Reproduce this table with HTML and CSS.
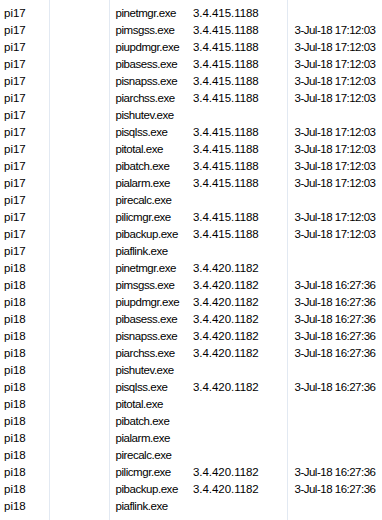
FILE: index.html
```html
<!DOCTYPE html>
<html>
<head>
<meta charset="utf-8">
<link rel="stylesheet" href="styles.css">
</head>
<body>
<table class="grid">
<colgroup><col class="c1"><col class="c2"><col class="c3"><col class="c4"><col class="c5"></colgroup>
<tbody>
<tr><td>pi17</td><td></td><td class="nm">pinetmgr.exe</td><td class="ver">3.4.415.1188</td><td class="dt"></td></tr>
<tr><td>pi17</td><td></td><td class="nm">pimsgss.exe</td><td class="ver">3.4.415.1188</td><td class="dt">3-Jul-18 17:12:03</td></tr>
<tr><td>pi17</td><td></td><td class="nm">piupdmgr.exe</td><td class="ver">3.4.415.1188</td><td class="dt">3-Jul-18 17:12:03</td></tr>
<tr><td>pi17</td><td></td><td class="nm">pibasess.exe</td><td class="ver">3.4.415.1188</td><td class="dt">3-Jul-18 17:12:03</td></tr>
<tr><td>pi17</td><td></td><td class="nm">pisnapss.exe</td><td class="ver">3.4.415.1188</td><td class="dt">3-Jul-18 17:12:03</td></tr>
<tr><td>pi17</td><td></td><td class="nm">piarchss.exe</td><td class="ver">3.4.415.1188</td><td class="dt">3-Jul-18 17:12:03</td></tr>
<tr><td>pi17</td><td></td><td class="nm">pishutev.exe</td><td class="ver"></td><td class="dt"></td></tr>
<tr><td>pi17</td><td></td><td class="nm">pisqlss.exe</td><td class="ver">3.4.415.1188</td><td class="dt">3-Jul-18 17:12:03</td></tr>
<tr><td>pi17</td><td></td><td class="nm">pitotal.exe</td><td class="ver">3.4.415.1188</td><td class="dt">3-Jul-18 17:12:03</td></tr>
<tr><td>pi17</td><td></td><td class="nm">pibatch.exe</td><td class="ver">3.4.415.1188</td><td class="dt">3-Jul-18 17:12:03</td></tr>
<tr><td>pi17</td><td></td><td class="nm">pialarm.exe</td><td class="ver">3.4.415.1188</td><td class="dt">3-Jul-18 17:12:03</td></tr>
<tr><td>pi17</td><td></td><td class="nm">pirecalc.exe</td><td class="ver"></td><td class="dt"></td></tr>
<tr><td>pi17</td><td></td><td class="nm">pilicmgr.exe</td><td class="ver">3.4.415.1188</td><td class="dt">3-Jul-18 17:12:03</td></tr>
<tr><td>pi17</td><td></td><td class="nm">pibackup.exe</td><td class="ver">3.4.415.1188</td><td class="dt">3-Jul-18 17:12:03</td></tr>
<tr><td>pi17</td><td></td><td class="nm">piaflink.exe</td><td class="ver"></td><td class="dt"></td></tr>
<tr><td>pi18</td><td></td><td class="nm">pinetmgr.exe</td><td class="ver">3.4.420.1182</td><td class="dt"></td></tr>
<tr><td>pi18</td><td></td><td class="nm">pimsgss.exe</td><td class="ver">3.4.420.1182</td><td class="dt">3-Jul-18 16:27:36</td></tr>
<tr><td>pi18</td><td></td><td class="nm">piupdmgr.exe</td><td class="ver">3.4.420.1182</td><td class="dt">3-Jul-18 16:27:36</td></tr>
<tr><td>pi18</td><td></td><td class="nm">pibasess.exe</td><td class="ver">3.4.420.1182</td><td class="dt">3-Jul-18 16:27:36</td></tr>
<tr><td>pi18</td><td></td><td class="nm">pisnapss.exe</td><td class="ver">3.4.420.1182</td><td class="dt">3-Jul-18 16:27:36</td></tr>
<tr><td>pi18</td><td></td><td class="nm">piarchss.exe</td><td class="ver">3.4.420.1182</td><td class="dt">3-Jul-18 16:27:36</td></tr>
<tr><td>pi18</td><td></td><td class="nm">pishutev.exe</td><td class="ver"></td><td class="dt"></td></tr>
<tr><td>pi18</td><td></td><td class="nm">pisqlss.exe</td><td class="ver">3.4.420.1182</td><td class="dt">3-Jul-18 16:27:36</td></tr>
<tr><td>pi18</td><td></td><td class="nm">pitotal.exe</td><td class="ver"></td><td class="dt"></td></tr>
<tr><td>pi18</td><td></td><td class="nm">pibatch.exe</td><td class="ver"></td><td class="dt"></td></tr>
<tr><td>pi18</td><td></td><td class="nm">pialarm.exe</td><td class="ver"></td><td class="dt"></td></tr>
<tr><td>pi18</td><td></td><td class="nm">pirecalc.exe</td><td class="ver"></td><td class="dt"></td></tr>
<tr><td>pi18</td><td></td><td class="nm">pilicmgr.exe</td><td class="ver">3.4.420.1182</td><td class="dt">3-Jul-18 16:27:36</td></tr>
<tr><td>pi18</td><td></td><td class="nm">pibackup.exe</td><td class="ver">3.4.420.1182</td><td class="dt">3-Jul-18 16:27:36</td></tr>
<tr><td>pi18</td><td></td><td class="nm">piaflink.exe</td><td class="ver"></td><td class="dt"></td></tr>
</tbody>
</table>
</body>
</html>
```
FILE: styles.css
```css
html, body {
  margin: 0;
  padding: 0;
  background: #ffffff;
}
body {
  width: 382px;
  height: 520px;
  overflow: hidden;
  font-family: "Liberation Sans", Arial, sans-serif;
  font-size: 11.5px;
  color: #000000;
}
.grid {
  border-collapse: collapse;
  table-layout: fixed;
  width: 382px;
}
.c1 { width: 49px; }
.c2 { width: 60px; }
.c3 { width: 80px; }
.c4 { width: 98px; }
.c5 { width: 95px; }
.grid td {
  height: 17px;
  line-height: 17px;
  padding: 0 0 0 4px;
  white-space: nowrap;
  overflow: hidden;
  vertical-align: bottom;
}
.grid td:nth-child(1),
.grid td:nth-child(2),
.grid td:nth-child(4) {
  border-right: 1px solid #e2e9f2;
}
.grid tr:first-child td {
  height: 22px;
}
.grid tr:last-child td {
  height: 22px;
  vertical-align: top;
}
.grid td.nm {
  padding-left: 6px;
  letter-spacing: -0.45px;
}
.grid td.ver {
  padding-left: 4px;
  letter-spacing: -0.05px;
}
.grid td.dt {
  padding-left: 7px;
  letter-spacing: -0.5px;
}
```
